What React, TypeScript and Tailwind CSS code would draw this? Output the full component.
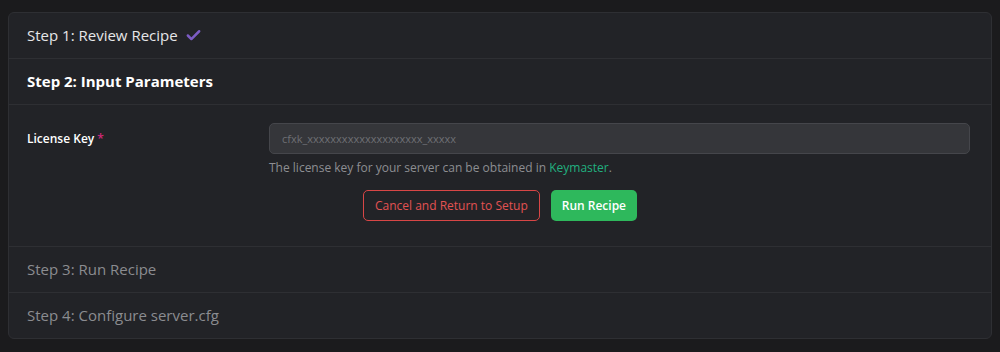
import { Check } from 'lucide-react';

const font = { fontFamily: '"Open Sans", "Noto Sans", sans-serif' };

const StepHeader = ({ title, muted, bold, done }: { title: string; muted?: boolean; bold?: boolean; done?: boolean }) => (
  <div className="flex h-[46px] items-center border-b border-[#2e2f33] px-[18px]">
    <span
      className={`text-[15px] ${bold ? 'font-bold text-white' : muted ? 'text-[#8b8c90]' : 'text-[#e6e6e8]'}`}
    >
      {title}
    </span>
    {done && <Check className="ml-[7px] h-[17px] w-[17px] text-[#7c5cc4]" strokeWidth={3.5} />}
  </div>
);

const App = () => {
  return (
    <div className="h-[352px] w-[1000px] bg-[#1b1b1d] px-[8px] pt-[12px]" style={font}>
      <div className="overflow-hidden rounded-[6px] border border-[#2e2f33] bg-[#222327]">
        <StepHeader title="Step 1: Review Recipe" done />
        <StepHeader title="Step 2: Input Parameters" bold />
        <div className="border-b border-[#2e2f33] pl-[18px] pr-[18px] pt-[18px] pb-[25px]">
          <div className="flex">
            <label className="w-[242px] pt-[7px] text-[12px] font-semibold text-white">
              License Key <span className="text-[#d0287a]">*</span>
            </label>
            <div className="flex-1 pr-[3px]">
              <input
                className="h-[31px] w-full rounded-[5px] border border-[#45464b] bg-[#35363a] px-[12px] text-[11px] text-white placeholder:text-[#6e6f74] outline-none"
                placeholder="cfxk_xxxxxxxxxxxxxxxxxxxx_xxxxx"
              />
              <p className="mt-[5px] text-[12px] text-[#8d8e92]">
                The license key for your server can be obtained in{' '}
                <span className="text-[#21b07f]">Keymaster</span>.
              </p>
            </div>
          </div>
          <div className="mt-[13px] flex justify-center gap-[11px]">
            <button className="h-[31px] rounded-[5px] border border-[#d84646] px-[11px] text-[12px] text-[#e35252]">
              Cancel and Return to Setup
            </button>
            <button className="h-[31px] rounded-[5px] bg-[#2eb85c] px-[11px] text-[12px] font-semibold text-white">
              Run Recipe
            </button>
          </div>
        </div>
        <StepHeader title="Step 3: Run Recipe" muted />
        <div className="flex h-[45px] items-center px-[18px]">
          <span className="text-[15px] text-[#8b8c90]">Step 4: Configure server.cfg</span>
        </div>
      </div>
    </div>
  );
};

export default App;
